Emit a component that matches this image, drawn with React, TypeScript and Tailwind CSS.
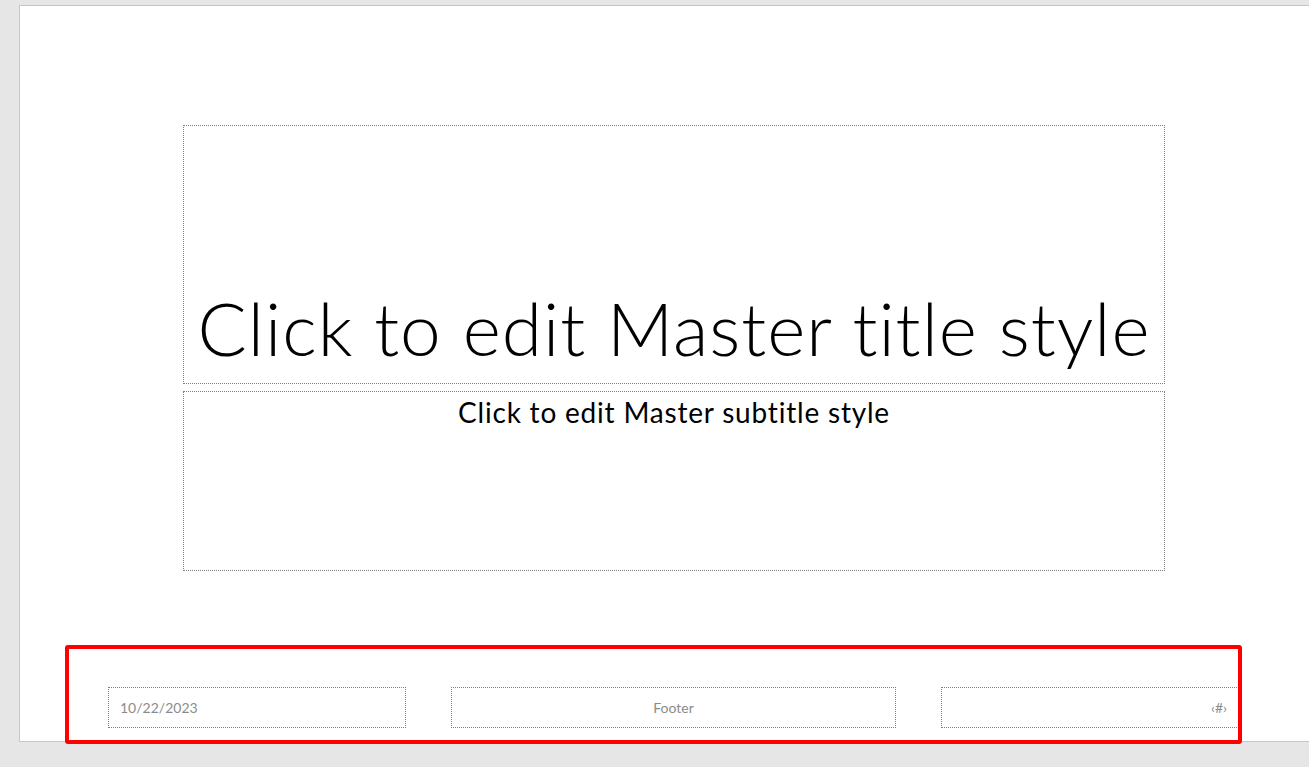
import React from "react";

const box = "border border-dotted border-[#7f7f7f]";

const FooterBox: React.FC<{ className: string; align: string; text: string }> = ({
	className,
	align,
	text,
}) => (
	<div className={`${box} ${className} h-[41px] flex items-center ${align} px-[11px]`}>
		<span className="text-[14px] text-[#8b8b8b] leading-none">{text}</span>
	</div>
);

const App: React.FC = () => {
	return (
		<div
			className="relative h-[767px] w-full overflow-hidden bg-[#e6e6e6] pl-[19px] pt-[5px]"
			style={{ fontFamily: "Lato, 'Open Sans', sans-serif" }}
		>
			{/* slide */}
			<div className="h-[737px] w-[1320px] border-l border-t border-b border-[#c6c6c6] bg-white flex flex-col">
				<div className="pl-[163px] pt-[119px] flex flex-col gap-[7px]">
					<div className={`${box} w-[982px] h-[259px] flex items-end justify-center pb-[18px]`}>
						<span className="text-[73px] font-light text-black leading-none tracking-[1px] whitespace-nowrap">
							Click to edit Master title style
						</span>
					</div>
					<div className={`${box} w-[982px] h-[180px] flex justify-center pt-[4px]`}>
						<span className="text-[28px] text-black leading-[32px] tracking-[0.8px] whitespace-nowrap">
							Click to edit Master subtitle style
						</span>
					</div>
				</div>

				<div className="pl-[88px] mt-[116px] flex gap-[45px]">
					<FooterBox className="w-[298px]" align="justify-start" text="10/22/2023" />
					<FooterBox className="w-[445px]" align="justify-center" text="Footer" />
					<FooterBox className="w-[298px]" align="justify-end" text="‹#›" />
				</div>
			</div>

			{/* red annotation frame */}
			<div className="absolute left-[65px] top-[645px] w-[1177px] h-[99px] border-4 border-[#ff0000] rounded-[3px] pointer-events-none" />
		</div>
	);
};

export default App;
